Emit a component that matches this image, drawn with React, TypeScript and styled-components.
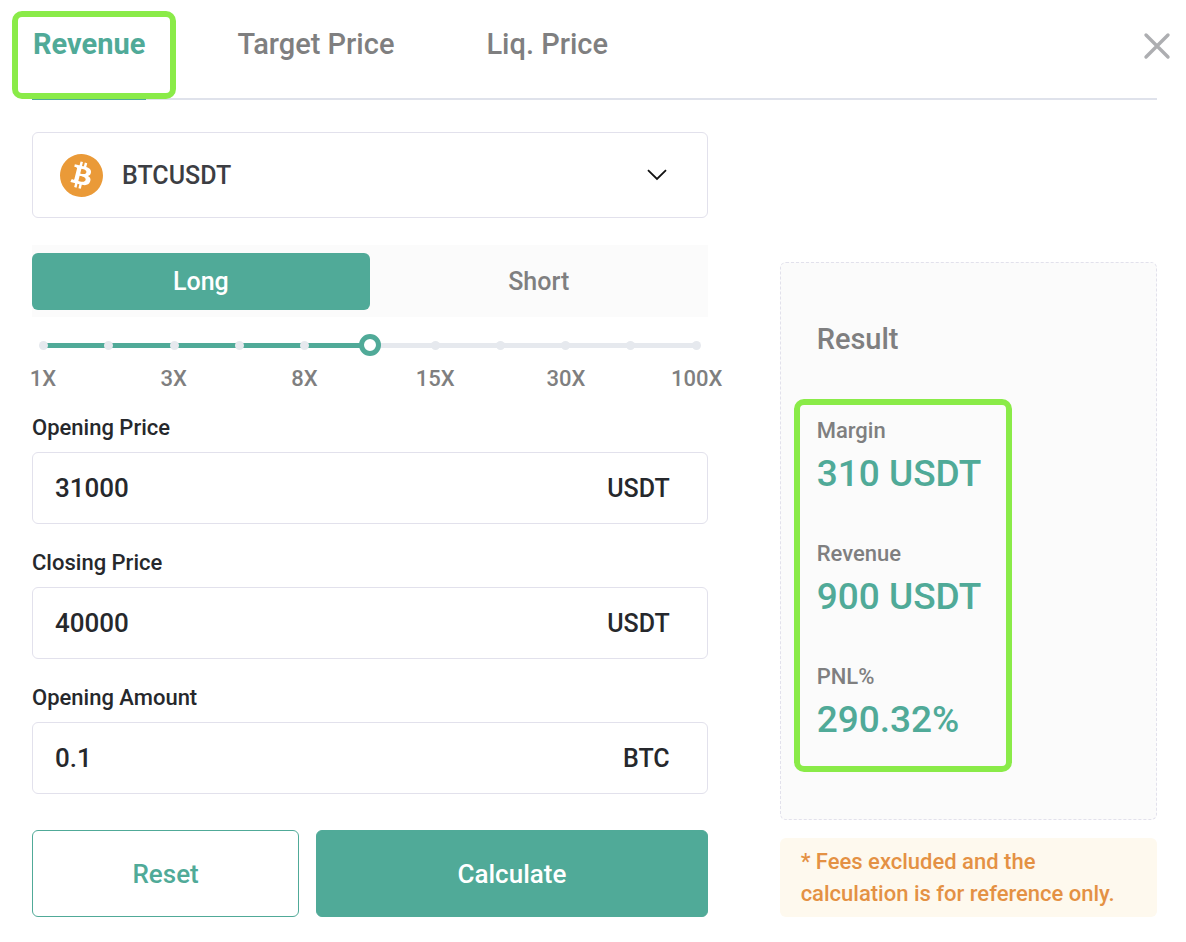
import React, { useState } from "react";
import styled, { createGlobalStyle, css } from "styled-components";
import { SiBitcoin } from "react-icons/si";

const green = "#50aa98";
const lime = "#8aeb48";
const grey = "#7f7f80";
const ink = "#26282c";
const line = "#e2e1ec";

const GlobalStyle = createGlobalStyle`
  *, *::before, *::after { box-sizing: border-box; }
  body {
    margin: 0;
    background: #fff;
    color: ${ink};
    font-family: Roboto, "Liberation Sans", sans-serif;
    font-weight: 500;
  }
  button, input, select { font: inherit; color: inherit; margin: 0; }
`;

const Dialog = styled.main`
  padding: 0 29px 24px 32px;
`;

const Header = styled.header`
  display: flex;
  align-items: flex-start;
  justify-content: space-between;
  height: 100px;
  border-bottom: 2px solid #dfe2eb;
`;

const Tabs = styled.div`
  display: flex;
  gap: 90px;
  height: 100px;
`;

const Tab = styled.button<{ $active?: boolean }>`
  position: relative;
  display: flex;
  align-items: flex-start;
  padding: 27px 1px 0;
  border: 0;
  border-bottom: 2px solid ${(p) => (p.$active ? green : "transparent")};
  background: none;
  color: ${(p) => (p.$active ? green : grey)};
  font-size: 29px;
  line-height: 34px;
  font-weight: ${(p) => (p.$active ? 700 : 500)};
  cursor: pointer;
  ${(p) =>
    p.$active &&
    css`
      &::after {
        content: "";
        position: absolute;
        inset: 11px -30px -1px -20px;
        border: 6px solid ${lime};
        border-radius: 10px;
      }
    `}
`;

const CloseButton = styled.button`
  display: flex;
  margin: 32px -14px 0 0;
  padding: 0;
  border: 0;
  background: none;
  cursor: pointer;
`;

const Columns = styled.div`
  display: grid;
  grid-template-columns: minmax(0, 675fr) minmax(0, 377fr);
  gap: 72px;
  padding-top: 32px;
`;

const Form = styled.form`
  display: flex;
  flex-direction: column;
`;

const PairPicker = styled.div`
  position: relative;
  display: flex;
  align-items: center;
`;

const PairSelect = styled.select`
  appearance: none;
  width: 100%;
  height: 86px;
  padding: 0 60px 0 89px;
  border: 1px solid ${line};
  border-radius: 6px;
  background: #fff;
  color: #3c3e43;
  font-size: 25px;
`;

const Coin = styled.span`
  position: absolute;
  left: 28px;
  display: flex;
  border-radius: 50%;
  color: #ea9a38;
  pointer-events: none;
`;

const Chevron = styled.svg`
  position: absolute;
  right: 41px;
  pointer-events: none;
`;

const Sides = styled.div`
  display: flex;
  margin-top: 27px;
  padding: 8px 0 7px;
  background: #fbfbfb;
`;

const Side = styled.button<{ $active?: boolean }>`
  flex: 1;
  height: 57px;
  border: 0;
  border-radius: 6px;
  background: ${(p) => (p.$active ? green : "transparent")};
  color: ${(p) => (p.$active ? "#fff" : grey)};
  font-size: 25px;
  cursor: pointer;
`;

const Leverage = styled.div`
  position: relative;
  height: 22px;
  margin-top: 17px;
`;

const Rail = styled.div`
  position: absolute;
  inset: 9px 11px 8px;
  background: #e6e9ee;
`;

const RailFill = styled.div`
  height: 100%;
  background: ${green};
`;

const Dots = styled.div`
  position: absolute;
  inset: 7px 7px auto;
  display: flex;
  justify-content: space-between;
`;

const Dot = styled.span`
  width: 9px;
  height: 9px;
  border-radius: 50%;
  background: #e6e9ee;
`;

const Range = styled.input`
  appearance: none;
  position: absolute;
  inset: 0;
  width: 100%;
  height: 22px;
  background: transparent;
  cursor: pointer;
  &::-webkit-slider-thumb {
    appearance: none;
    width: 22px;
    height: 22px;
    border: 5px solid ${green};
    border-radius: 50%;
    background: #fff;
  }
`;

const Marks = styled.div`
  display: flex;
  justify-content: space-between;
  margin-top: 10px;
  padding: 0 11px;
`;

const Mark = styled.span`
  display: flex;
  justify-content: center;
  width: 0;
  color: ${grey};
  font-size: 22px;
  line-height: 26px;
`;

const Fields = styled.div`
  display: grid;
  gap: 23px;
  margin-top: 20px;
`;

const FieldLabel = styled.label`
  display: block;
  margin-bottom: 8px;
  font-size: 22px;
  line-height: 32px;
`;

const FieldBox = styled.div`
  display: flex;
  align-items: center;
  height: 72px;
  padding: 0 37px 0 22px;
  border: 1px solid ${line};
  border-radius: 6px;
  font-size: 25px;
`;

const FieldInput = styled.input`
  flex: 1;
  min-width: 0;
  padding: 0;
  border: 0;
  outline: 0;
  background: none;
  font-size: 26px;
`;

const Actions = styled.div`
  display: grid;
  grid-template-columns: minmax(0, 267fr) minmax(0, 391fr);
  gap: 17px;
  margin-top: 36px;
`;

const ActionButton = styled.button<{ $primary?: boolean }>`
  height: 87px;
  border: 1px solid ${green};
  border-radius: 6px;
  background: ${(p) => (p.$primary ? green : "#fff")};
  color: ${(p) => (p.$primary ? "#fff" : green)};
  font-size: 26px;
  cursor: pointer;
`;

const ResultColumn = styled.aside`
  display: flex;
  flex-direction: column;
  justify-content: flex-end;
  gap: 18px;
`;

const ResultCard = styled.section`
  height: 558px;
  padding: 59px 13px 0;
  border: 1px dashed ${line};
  border-radius: 6px;
  background: #fbfbfb;
`;

const ResultTitle = styled.h2`
  margin: 0 0 43px;
  padding-left: 23px;
  color: ${grey};
  font-size: 29px;
  line-height: 34px;
  font-weight: 500;
`;

const ResultList = styled.dl`
  display: grid;
  align-content: start;
  gap: 44px;
  width: fit-content;
  min-width: 218px;
  height: 373px;
  margin: 0;
  padding: 12px 17px 0;
  border: 6px solid ${lime};
  border-radius: 10px;
`;

const ResultName = styled.dt`
  color: ${grey};
  font-size: 22px;
  line-height: 28px;
`;

const ResultValue = styled.dd`
  margin: 7px 0 0;
  color: ${green};
  font-size: 37px;
  line-height: 44px;
`;

const Note = styled.p`
  margin: 0;
  padding: 8px 20px 7px 21px;
  border-radius: 6px;
  background: #fef9ee;
  color: #e49144;
  font-size: 22px;
  line-height: 32px;
`;

const tabs = ["Revenue", "Target Price", "Liq. Price"];
const marks = ["1X", "3X", "8X", "15X", "30X", "100X"];
const fields = [
  { id: "open", label: "Opening Price", value: "31000", unit: "USDT" },
  { id: "close", label: "Closing Price", value: "40000", unit: "USDT" },
  { id: "amount", label: "Opening Amount", value: "0.1", unit: "BTC" },
];
const results = [
  ["Margin", "310 USDT"],
  ["Revenue", "900 USDT"],
  ["PNL%", "290.32%"],
];

export default function App() {
  const [tab, setTab] = useState(0);
  const [side, setSide] = useState("Long");
  const [step, setStep] = useState(5);

  return (
    <Dialog>
      <GlobalStyle />
      <Header>
        <Tabs role="tablist">
          {tabs.map((name, i) => (
            <Tab key={name} type="button" role="tab" aria-selected={i === tab} $active={i === tab} onClick={() => setTab(i)}>
              {name}
            </Tab>
          ))}
        </Tabs>
        <CloseButton type="button" aria-label="Close">
          <svg width="28" height="28" viewBox="0 0 28 28" fill="none" stroke="#adaeb1" strokeWidth="3.4" strokeLinecap="round">
            <path d="M3 3 25 25M25 3 3 25" />
          </svg>
        </CloseButton>
      </Header>

      <Columns>
        <Form onSubmit={(e) => e.preventDefault()}>
          <PairPicker>
            <PairSelect aria-label="Trading pair">
              <option>BTCUSDT</option>
            </PairSelect>
            <Coin>
              <SiBitcoin size={43} />
            </Coin>
            <Chevron width="20" height="12" viewBox="0 0 20 12" fill="none" stroke="#111" strokeWidth="1.8">
              <path d="M1 1.2 10 10 19 1.2" />
            </Chevron>
          </PairPicker>

          <Sides>
            {["Long", "Short"].map((name) => (
              <Side key={name} type="button" aria-pressed={side === name} $active={side === name} onClick={() => setSide(name)}>
                {name}
              </Side>
            ))}
          </Sides>

          <Leverage>
            <Rail>
              <RailFill style={{ width: `${step * 10}%` }} />
            </Rail>
            <Dots>
              {Array.from({ length: 11 }, (_, i) => (
                <Dot key={i} />
              ))}
            </Dots>
            <Range type="range" aria-label="Leverage" min={0} max={10} value={step} onChange={(e) => setStep(Number(e.target.value))} />
          </Leverage>
          <Marks>
            {marks.map((m) => (
              <Mark key={m}>{m}</Mark>
            ))}
          </Marks>

          <Fields>
            {fields.map((f) => (
              <div key={f.id}>
                <FieldLabel htmlFor={f.id}>{f.label}</FieldLabel>
                <FieldBox>
                  <FieldInput id={f.id} defaultValue={f.value} inputMode="decimal" />
                  <span>{f.unit}</span>
                </FieldBox>
              </div>
            ))}
          </Fields>

          <Actions>
            <ActionButton type="reset">Reset</ActionButton>
            <ActionButton type="submit" $primary>
              Calculate
            </ActionButton>
          </Actions>
        </Form>

        <ResultColumn>
          <ResultCard>
            <ResultTitle>Result</ResultTitle>
            <ResultList>
              {results.map(([name, value]) => (
                <div key={name}>
                  <ResultName>{name}</ResultName>
                  <ResultValue>{value}</ResultValue>
                </div>
              ))}
            </ResultList>
          </ResultCard>
          <Note>* Fees excluded and the calculation is for reference only.</Note>
        </ResultColumn>
      </Columns>
    </Dialog>
  );
}
